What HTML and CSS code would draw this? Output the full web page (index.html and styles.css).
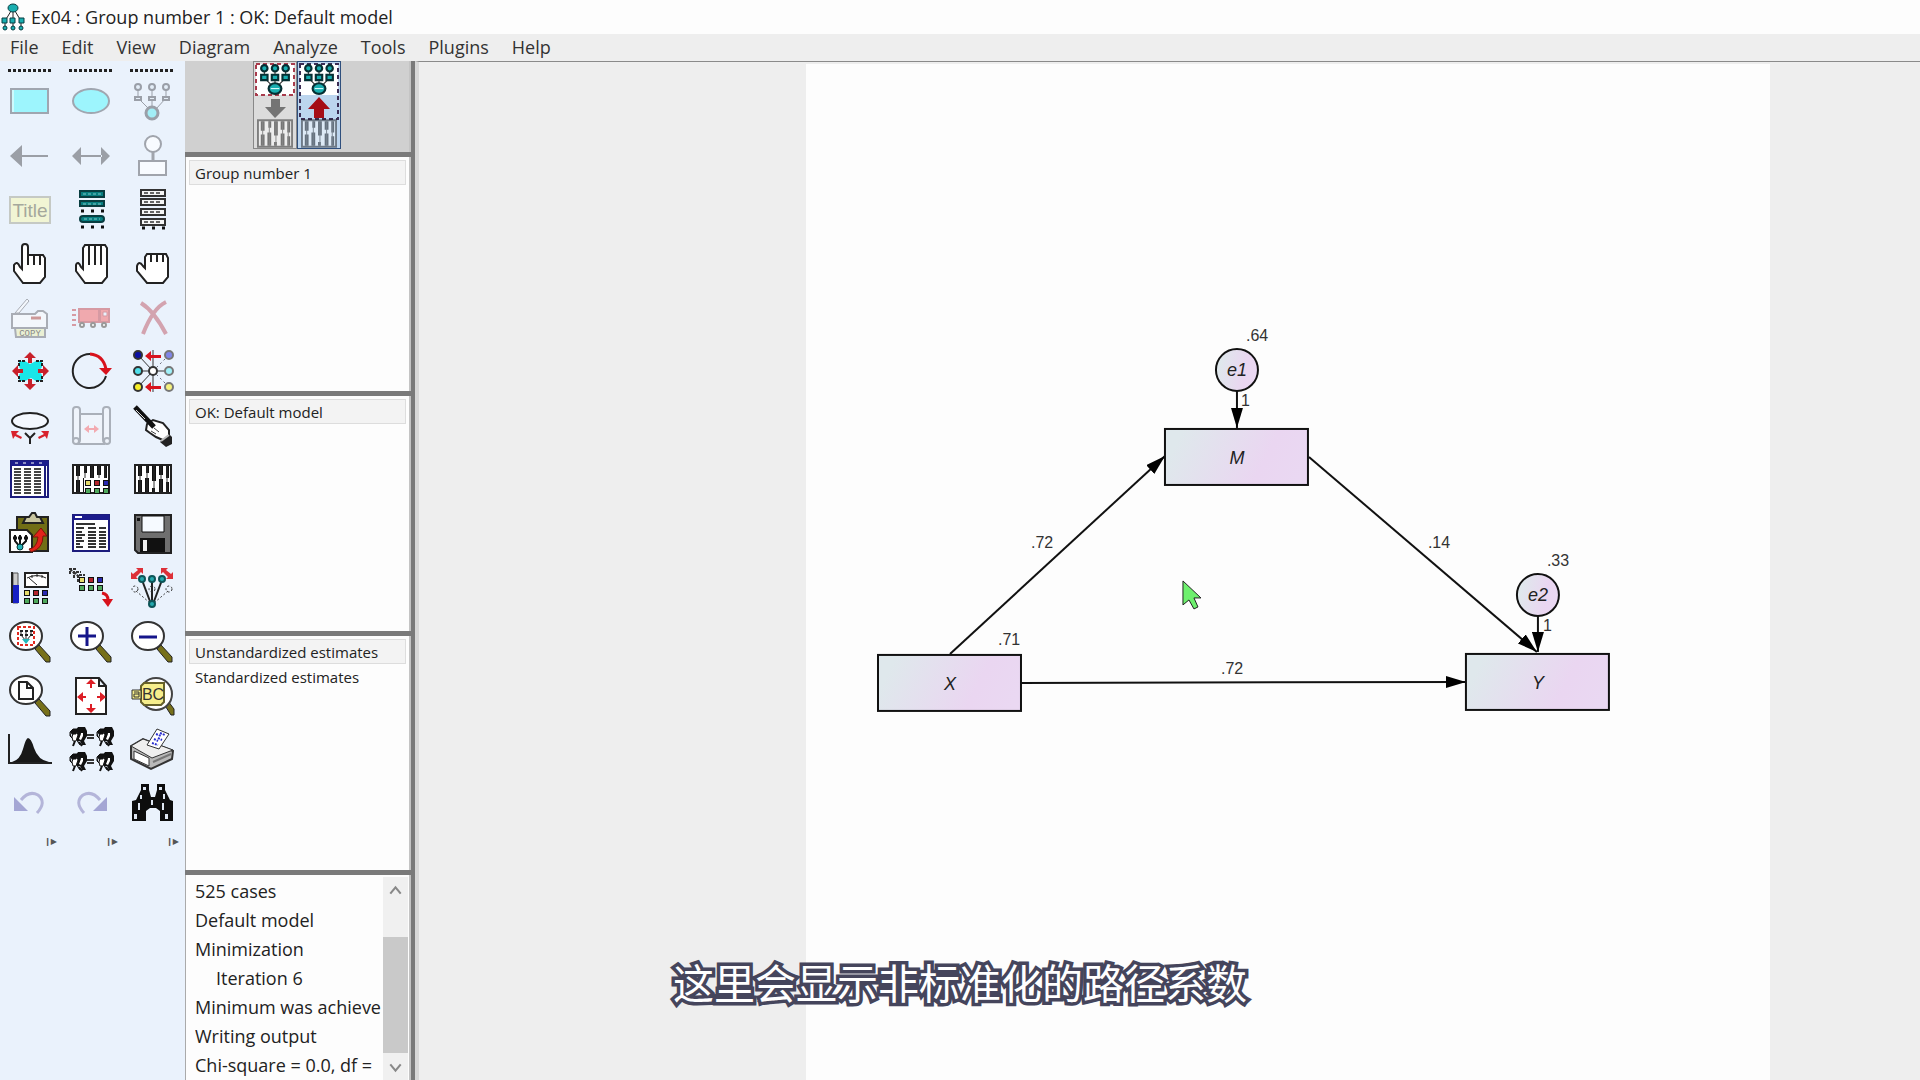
FILE: index.html
```html
<!DOCTYPE html>
<html lang="en">
<head>
  <meta charset="UTF-8">
  <meta name="viewport" content="width=device-width, initial-scale=1.0">
  <title>Ex04 : Group number 1 : OK: Default model</title>
  <link rel="stylesheet" href="styles.css">
</head>
<body>
  <!-- shared icon parts -->
  <svg class="defs" aria-hidden="true">
    <defs>
      <linearGradient id="fill" x1="0" y1="0.4" x2="1" y2="0.6">
        <stop offset="0.05" stop-color="#dfe8ec"/>
        <stop offset="0.7" stop-color="#ead6f1"/>
        <stop offset="1" stop-color="#ead8f2"/>
      </linearGradient>
      <marker id="head" viewBox="0 0 20 12" refX="20" refY="6" markerWidth="20" markerHeight="12" markerUnits="userSpaceOnUse" orient="auto">
        <path d="M0 0L20 6L0 12z"/>
      </marker>
      <symbol id="lens" viewBox="0 0 46 46">
        <path d="M28 31L32 27L43 39V44H39z" fill="#77701a" stroke="#222" stroke-width="1"/>
        <ellipse cx="19" cy="18" rx="16" ry="14" fill="#fff" stroke="#333" stroke-width="2"/>
      </symbol>
      <symbol id="squares" viewBox="0 0 24 15">
        <path d="M0 0H6V6H0zM9 0H15V6H9zM18 0H24V6H18zM0 8H6V14H0zM9 8H15V14H9zM18 8H24V14H18z" fill="#111"/>
        <path d="M1 1H5V5H1z" fill="#e6dc6c"/><path d="M10 1H14V5H10z" fill="#b3242c"/><path d="M19 1H23V5H19z" fill="#2a2ab0"/>
        <path d="M1 9H5V13H1zM10 9H14V13H10zM19 9H23V13H19z" fill="#4fa95c"/>
      </symbol>
      <symbol id="keys" viewBox="0 0 38 30">
        <path d="M1 1H37V29H1z" fill="#fff" stroke="#222" stroke-width="2"/>
        <path d="M4 2H8V12H4zM12 2H15V9H12zM18 2H22V17H18zM25 2H29V11H25zM32 2H35V14H32zM4 16H8V28H4zM11 14H15V28H11zM18 24H21V28H18zM25 15H29V28H25zM32 18H35V28H32z" fill="#111"/>
        <path d="M6 2V28M13 2V28M20 2V28M27 2V28M33 2V28" stroke="#333" stroke-width="1"/>
      </symbol>
      <symbol id="tree" viewBox="0 0 30 30">
        <path d="M5 4V14L15 24L25 14V4M15 4V24" fill="none" stroke="#333"/>
        <g fill="#19aeb0" stroke="#062f33" stroke-width="2">
          <circle cx="5" cy="5" r="3"/><circle cx="15" cy="5" r="3"/><circle cx="25" cy="5" r="3"/>
          <path d="M2 11H8V16H2zM12 11H18V16H12zM22 11H28V16H22z"/>
          <ellipse cx="15" cy="24" rx="6" ry="5"/>
        </g>
        <path d="M11 24H19" stroke="#dff"/>
      </symbol>
      <symbol id="heads" viewBox="0 0 18 20">
        <path d="M7 3L9 0H16L18 4V9L15 14L17 18H13L11 14H8z" fill="#111"/>
        <path d="M12 6H14V9L12 13L10 12z" fill="#fff"/>
        <path d="M1 5L4 2H9L11 5V8L9 12V15L11 18M1 5V9L3 11" fill="#111" stroke="#111"/>
        <path d="M4 7H7L8 5L9 8L7 14H4L3 10z" fill="#fff" stroke="#111"/>
        <path d="M6 14L4 19M10 15L13 19" stroke="#111" stroke-width="2"/>
      </symbol>
    </defs>
  </svg>

  <header class="titlebar">
    <svg class="app-icon" viewBox="0 0 24 28" aria-hidden="true">
      <path d="M12 6V24M10 8L4 18V24M14 8L20 18V24" fill="none" stroke="#222"/>
      <g fill="#19aeb0" stroke="#063c40" stroke-width="1">
        <ellipse cx="12" cy="5" rx="5" ry="4"/>
        <path d="M1 15H6V20H1zM9 15H14V20H9zM18 15H23V20H18z"/>
        <circle cx="4" cy="25" r="2"/><circle cx="12" cy="25" r="2"/><circle cx="20" cy="25" r="2"/>
      </g>
    </svg>
    <h1>Ex04 : Group number 1 : OK: Default model</h1>
  </header>

  <nav class="menubar">
    <a href="#">File</a>
    <a href="#">Edit</a>
    <a href="#">View</a>
    <a href="#">Diagram</a>
    <a href="#">Analyze</a>
    <a href="#">Tools</a>
    <a href="#">Plugins</a>
    <a href="#">Help</a>
  </nav>

  <main class="workspace">
    <aside class="toolbox">
      <i class="grip"></i><i class="grip"></i><i class="grip"></i>

      <button aria-label="Draw observed variable"><svg viewBox="0 0 46 46"><path d="M4 11H41V35H4z" fill="#9df5fd" stroke="#a0a6b0" stroke-width="2"/><path d="M6 12V34" stroke="#fff"/></svg></button>
      <button aria-label="Draw unobserved variable"><svg viewBox="0 0 46 46"><ellipse cx="23" cy="23" rx="18" ry="12" fill="#9df5fd" stroke="#a0a6b0" stroke-width="2"/></svg></button>
      <button aria-label="Draw latent variable"><svg viewBox="0 0 46 46" fill="#e4eef8" stroke="#9a9fa8" stroke-width="2"><path d="M9 12V20L20 31M23 12V29M37 12V20L27 31" fill="none" stroke-width="1"/><circle cx="9" cy="9" r="3"/><circle cx="23" cy="9" r="3"/><circle cx="37" cy="9" r="3"/><path d="M6 19H12V22H6zM20 19H26V22H20zM34 19H40V22H34z"/><circle cx="23" cy="35" r="6" fill="#a2eef6" stroke-width="3"/></svg></button>

      <button aria-label="Draw path"><svg viewBox="0 0 46 46" fill="#9b9fa6"><path d="M3 24L15 13V35zM14 23H41V25H14z"/></svg></button>
      <button aria-label="Draw covariance"><svg viewBox="0 0 46 46" fill="#9b9fa6"><path d="M4 24L13 15V33zM42 24L33 15V33zM12 23H34V25H12z"/></svg></button>
      <button aria-label="Add unique variable"><svg viewBox="0 0 46 46" fill="#f8fbff" stroke="#a0a4ac"><path d="M24 19V29" stroke-width="3"/><circle cx="24" cy="12" r="8" stroke-width="2"/><path d="M10 29H37V43H10z" stroke-width="2"/></svg></button>

      <button aria-label="Figure caption"><svg viewBox="0 0 46 46"><path d="M3 11H43V37H3z" fill="#f1f5d4" stroke="#c5c9c4" stroke-width="2"/><text class="title-glyph" x="23" y="31" text-anchor="middle">Title</text></svg></button>
      <button aria-label="List variables in model"><svg viewBox="0 0 46 46"><g fill="#087e80" stroke="#083d40" stroke-width="2"><path d="M12 5H36V11H12zM12 15H36V20H12z"/><rect x="12" y="30" width="24" height="6" rx="3"/></g><path d="M15 8H33M15 18H33M16 33H32" stroke="#7cc8c8" stroke-dasharray="3 2"/><path d="M13 25H36M13 41H36" stroke="#111" stroke-width="3" stroke-dasharray="3 7"/></svg></button>
      <button aria-label="List variables in data set"><svg viewBox="0 0 46 46"><g fill="#f5f5f5" stroke="#333" stroke-width="2"><path d="M12 4H36V10H12zM12 13H36V19H12zM12 23H36V29H12zM12 33H36V39H12z"/></g><path d="M15 7H33M15 16H33M15 26H33M15 36H33" stroke="#666" stroke-width="2" stroke-dasharray="4 2"/><path d="M13 42H36" stroke="#111" stroke-width="3" stroke-dasharray="3 7"/></svg></button>

      <button aria-label="Select one object"><svg viewBox="0 0 46 46" fill="#fff" stroke="#222" stroke-width="2"><path d="M15 29V7Q15 4 18 4T21 7V15H36L38 18V37L33 43H16L7 31V25Q10 20 13 27zM21 15V25M27 15V25M33 15V25"/></svg></button>
      <button aria-label="Select all objects"><svg viewBox="0 0 46 46" fill="#fff" stroke="#222" stroke-width="2"><path d="M15 29V8L17 5H37L39 8V37L34 43H17L8 31V25Q10 20 13 27zM21 5V25M27 5V25M33 5V25"/></svg></button>
      <button aria-label="Deselect all objects"><svg viewBox="0 0 46 46" fill="#fff" stroke="#222" stroke-width="2"><path d="M16 28V17L18 14H37L39 18V37L34 43H18L8 31V26Q10 20 14 26zM22 15V22M28 15V22M34 15V22"/></svg></button>

      <button aria-label="Duplicate objects"><svg viewBox="0 0 46 46" fill="#f3f7fc" stroke="#a9adb5"><path d="M8 19L20 5L22 7L12 19z"/><path d="M5 20H28L31 17H36L40 20V34H5z" stroke-width="2"/><path d="M8 34H38V43H9z" fill="#eaf0d4" stroke-width="2"/><path d="M24 24H34" stroke="#c99" stroke-width="3"/><text class="copy-glyph" x="23" y="42" text-anchor="middle">COPY</text></svg></button>
      <button aria-label="Move objects"><svg viewBox="0 0 46 46" stroke="#d69aa3"><path d="M11 15H31V28H11zM32 28V15H41V28z" fill="#f0a9ae" stroke-width="2"/><path d="M35 18H39V22H35z" fill="#eaf2fc"/><path d="M4 16H8M4 21H8M4 26H8M4 31H8" stroke-width="2"/><g fill="#fff" stroke="#999" stroke-width="2"><circle cx="14" cy="31" r="2"/><circle cx="25" cy="31" r="2"/><circle cx="36" cy="31" r="2"/></g></svg></button>
      <button aria-label="Erase objects"><svg viewBox="0 0 46 46" fill="none" stroke="#d3a3af" stroke-width="4"><path d="M12 9Q25 17 37 40M37 8Q24 14 14 40"/></svg></button>

      <button aria-label="Change the shape of objects"><svg viewBox="0 0 46 46"><path d="M12 13H18L23 16L29 13H35V19L32 23L35 27V33H29L24 30L18 33H12V27L15 23L12 19z" fill="#19e7e9"/><path d="M12 18V13H18M29 13H35V18M35 28V33H29M18 33H12V28" fill="none" stroke="#222" stroke-width="2" stroke-dasharray="3 1"/><path d="M23 4L29 10H25V15H21V10H17zM23 42L29 36H25V31H21V36H17zM5 23L11 17V21H16V25H11V29zM42 23L36 17V21H31V25H36V29z" fill="#c8202a"/></svg></button>
      <button aria-label="Rotate indicators"><svg viewBox="0 0 46 46" fill="none"><path d="M38 28A17 17 0 1 1 22 6" stroke="#222" stroke-width="2"/><path d="M22 6Q35 7 38 21" stroke="#d8121c" stroke-width="3"/><path d="M31 20H44L38 27z" fill="#d8121c"/></svg></button>
      <button aria-label="Reflect indicators"><svg viewBox="0 0 46 46"><path d="M9 7L24 23L9 39M9 23H40M24 2V44" fill="none" stroke="#333"/><path d="M24 23L40 7M24 23L40 39" stroke="#667" stroke-dasharray="2 3"/><g stroke="#333" stroke-width="2"><circle cx="9" cy="7" r="4" fill="#0c10a4"/><circle cx="9" cy="23" r="4" fill="#4fdfea"/><circle cx="9" cy="39" r="4" fill="#f7ee28"/><circle cx="24" cy="23" r="4" fill="#fff"/></g><g stroke="#777" stroke-width="2"><circle cx="40" cy="7" r="4" fill="#8085e8"/><circle cx="40" cy="23" r="4" fill="#9ff0f8"/><circle cx="40" cy="39" r="4" fill="#f5f17c"/></g><path d="M16 8L22 3V7H32V10H22V13zM16 39L22 34V38H32V41H22V44z" fill="#d8121c"/></svg></button>

      <button aria-label="Move parameter values"><svg viewBox="0 0 46 46"><ellipse cx="23" cy="19" rx="18" ry="8" fill="#f4f8fe" stroke="#222" stroke-width="2"/><path d="M18 31L23 36L28 31M23 36V42" fill="none" stroke="#222" stroke-width="2"/><path d="M4 29H12L9 32L15 35L14 37L8 34L6 37zM42 29H34L37 32L31 35L32 37L38 34L40 37z" fill="#d8222c"/></svg></button>
      <button aria-label="Reposition path diagram"><svg viewBox="0 0 46 46" fill="#eff4fb" stroke="#aab0b9" stroke-width="2"><path d="M11 12H36V42H8"/><rect x="5" y="5" width="7" height="36" rx="3"/><rect x="35" y="5" width="7" height="36" rx="3"/><circle cx="8" cy="39" r="3"/><circle cx="39" cy="39" r="3"/><path d="M16 27L21 23V26H26V23L31 27L26 31V28H21V31z" fill="#f3aab0" stroke="none"/></svg></button>
      <button aria-label="Touch up a variable"><svg viewBox="0 0 46 46"><path d="M18 22L24 18L34 21L40 28V34L36 39L27 35L21 31L17 28z" fill="#fff" stroke="#222" stroke-width="2"/><path d="M22 29L27 32M25 26L30 30" stroke="#444"/><path d="M6 5L25 25" stroke="#111" stroke-width="5"/><path d="M7 8L16 17" stroke="#ddd" stroke-width="1"/><path d="M31 40L40 32L43 35V42L37 45z" fill="#222"/><path d="M32 39L40 33" stroke="#bbb" stroke-width="2"/></svg></button>

      <button aria-label="Select data files"><svg viewBox="0 0 46 46"><path d="M4 5H41V41H4z" fill="#fff" stroke="#1c1c7c" stroke-width="2"/><path d="M4 5H41V10H4z" fill="#1c1c8c"/><path d="M8 7H38" stroke="#fff" stroke-dasharray="3 5"/><path d="M7 13H14M17 13H24M27 13H34M7 16H14M17 16H24M27 16H34M7 19H14M17 19H24M27 19H34M7 22H14M17 22H24M27 22H34M7 25H14M17 25H24M27 25H34M7 28H14M17 28H24M27 28H34M7 31H14M17 31H24M27 31H34M7 34H14M17 34H24M27 34H34M7 37H14M17 37H24M27 37H34" stroke="#444" stroke-width="2"/><path d="M38 10V40" stroke="#1c1c7c" stroke-width="2"/></svg></button>
      <button aria-label="Analysis properties"><svg viewBox="0 0 46 46"><use href="#keys" x="4" y="8" width="38" height="30"/><path d="M16 22H40V36H16z" fill="#fff"/><use href="#squares" x="17" y="24" width="24" height="15"/></svg></button>
      <button aria-label="Calculate estimates"><svg viewBox="0 0 46 46"><use href="#keys" x="5" y="8" width="38" height="30"/></svg></button>

      <button aria-label="Copy diagram to clipboard"><svg viewBox="0 0 46 46"><path d="M10 7H41V41H10z" fill="#716e15" stroke="#222" stroke-width="2"/><path d="M16 13L19 7H22L25 3H28L30 7H33L36 13z" fill="#c9c6a0" stroke="#222" stroke-width="2"/><path d="M3 20H20L25 25V42H3z" fill="#fff" stroke="#222" stroke-width="2"/><path d="M8 25V31L13 37L19 31V25M13 25V36" fill="none" stroke="#111" stroke-width="2"/><path d="M6 28H10M11 28H15M17 28H21" stroke="#111" stroke-width="3"/><circle cx="13" cy="37" r="3" fill="#26b3b8" stroke="#033"/><path d="M22 39Q30 38 31 27H26L34 18L40 26H36Q36 39 24 42z" fill="#e2231a" stroke="#7c1508"/></svg></button>
      <button aria-label="View text"><svg viewBox="0 0 46 46"><path d="M5 5H41V41H5z" fill="#fff" stroke="#1c1c7c" stroke-width="2"/><path d="M5 5H41V10H5z" fill="#1c1c8c"/><path d="M7 7H14" stroke="#fff" stroke-width="2"/><path d="M8 14H27M8 18H16M20 18H28M31 18H38M8 22H14M20 22H28M31 22H38M8 25H17M20 25H28M31 25H38M8 28H14M20 28H28M31 28H38M8 31H16M20 31H28M31 31H38M8 34H12M20 34H28M31 34H38M8 37H15M20 37H28M31 37H38" stroke="#333" stroke-width="2"/></svg></button>
      <button aria-label="Save diagram"><svg viewBox="0 0 46 46"><path d="M6 5H42V43H9L6 40z" fill="#6f6f6f" stroke="#222" stroke-width="2"/><path d="M13 6H35V22H13z" fill="#f6faff" stroke="#111"/><path d="M8 8H11V11H8zM11 28H36V42H11z" fill="#111"/><path d="M14 30H18V41H14z" fill="#eee"/></svg></button>

      <button aria-label="Object properties"><svg viewBox="0 0 46 46"><path d="M6 9H11V39H6z" fill="#ccc" stroke="#555"/><path d="M6 21H12V39H6z" fill="#1820c4"/><path d="M5 8V39" stroke="#222" stroke-width="2"/><path d="M18 9H41V23H18z" fill="#fff" stroke="#222" stroke-width="2"/><path d="M20 14Q30 9 39 14M30 21L22 14M25 11V14M30 10V13M35 11V14" fill="none" stroke="#222"/><use href="#squares" x="17" y="26" width="24" height="15"/></svg></button>
      <button aria-label="Drag properties"><svg viewBox="0 0 46 46"><path d="M2 10V5H9M6 14V8H13M10 18V11H17M2 5L7 10M6 8L11 13" fill="none" stroke="#333" stroke-width="2" stroke-dasharray="3 1"/><use href="#squares" x="11" y="13" width="24" height="15"/><path d="M34 29Q40 30 40 36" fill="none" stroke="#d8121c" stroke-width="3"/><path d="M34 35H45L40 43z" fill="#d8121c"/></svg></button>
      <button aria-label="Preserve symmetries"><svg viewBox="0 0 46 46"><path d="M13 16L22 40M23 16V38M33 16L24 40" stroke="#222" stroke-width="2"/><path d="M7 27L21 39M39 27L25 39" stroke="#444" stroke-dasharray="2 2"/><g fill="#24a9ae" stroke="#0d5558" stroke-width="2"><circle cx="13" cy="15" r="3"/><circle cx="23" cy="15" r="3"/><circle cx="33" cy="15" r="3"/><circle cx="23" cy="40" r="3"/></g><g fill="none" stroke="#333" stroke-dasharray="2 2"><circle cx="6" cy="25" r="3"/><circle cx="40" cy="25" r="3"/><circle cx="23" cy="25" r="3"/></g><path d="M2 15V8L4 10L9 6L7 4H14V10L12 8L7 13L9 15zM44 15V8L42 10L37 6L39 4H32V10L34 8L39 13L37 15z" fill="#dd3038"/></svg></button>

      <button aria-label="Zoom in on an area"><svg viewBox="0 0 46 46"><use href="#lens"/><path d="M11 9H27V27H11z" fill="none" stroke="#e02a20" stroke-width="2" stroke-dasharray="3 2"/><path d="M14 12V17L19 23L24 17V12M19 12V22" fill="none" stroke="#222"/><path d="M13 13H26M13 17H26" stroke="#222" stroke-width="2" stroke-dasharray="3 2"/><path d="M15 21H23L19 26z" fill="#23b7ba"/></svg></button>
      <button aria-label="Zoom in"><svg viewBox="0 0 46 46"><use href="#lens"/><path d="M19 9V28M10 18H28" stroke="#15158a" stroke-width="3"/></svg></button>
      <button aria-label="Zoom out"><svg viewBox="0 0 46 46"><use href="#lens"/><path d="M10 19H28" stroke="#15158a" stroke-width="3"/></svg></button>

      <button aria-label="Show page"><svg viewBox="0 0 46 46"><use href="#lens"/><path d="M12 10H20L26 16V27H12zM20 10V16H26" fill="#fff" stroke="#222" stroke-width="2"/></svg></button>
      <button aria-label="Resize diagram to page"><svg viewBox="0 0 46 46"><path d="M8 6H31L38 14V42H8zM31 6V14H38" fill="#fff" stroke="#222" stroke-width="2"/><path d="M23 7L28 12H24V16H22V12H18zM23 41L28 36H24V32H22V36H18zM9 25L15 20V24H18V26H15V30zM38 25L32 20V24H29V26H32V30z" fill="#dc1e26"/></svg></button>
      <button aria-label="Loupe"><svg viewBox="0 0 46 46"><path d="M35 32L39 29L45 37V43H42z" fill="#77701a" stroke="#222"/><circle cx="27" cy="22" r="16" fill="#fff" stroke="#444" stroke-width="2"/><path d="M12 14L15 11H35V30L32 33H15L12 30z" fill="#f6ee8c" stroke="#66612a" stroke-width="2"/><path d="M3 18H12V27H3zM5 20H10V25H5V22H10" fill="#f6ee8c" stroke="#333"/><text class="loupe-glyph" x="24" y="28" text-anchor="middle">BC</text></svg></button>

      <button aria-label="Bayesian estimation"><svg viewBox="0 0 46 46"><path d="M2 8V37H45" fill="none" stroke="#222" stroke-width="2"/><path d="M5 36Q13 34 16 23Q19 12 21 12Q24 12 27 22Q31 34 42 36z" fill="#181818"/></svg></button>
      <button aria-label="Multiple-group analysis"><svg viewBox="0 0 46 46"><use href="#heads" x="1" y="1" width="18" height="20"/><use href="#heads" x="28" y="1" width="18" height="20"/><use href="#heads" x="1" y="26" width="18" height="20"/><use href="#heads" x="28" y="26" width="18" height="20"/><path d="M19 9H26M19 12H26M19 34H26M19 37H26" stroke="#333" stroke-width="2"/></svg></button>
      <button aria-label="Print"><svg viewBox="0 0 46 46" stroke="#333"><path d="M2 20L14 13L44 25L43 33L22 43L2 33z" fill="#b9b9b9" stroke-width="2"/><path d="M2 20L14 13L44 24L23 32z" fill="#efefef"/><path d="M5 25L20 32V40L5 33z" fill="#fff"/><path d="M24 36L42 28" stroke="#777" stroke-width="2"/><path d="M18 19L28 3L40 8L30 23z" fill="#fff"/><path d="M27 8L32 10M29 12L33 14M25 13L29 15M31 7L36 9M23 17L29 19" stroke="#2a2fd0" stroke-width="2" stroke-dasharray="2 1"/></svg></button>

      <button aria-label="Undo"><svg viewBox="0 0 46 46"><path d="M14 20Q22 10 31 15Q40 22 30 33" fill="none" stroke="#b4b5d9" stroke-width="3"/><path d="M7 17V31H21z" fill="#a4a6d4"/></svg></button>
      <button aria-label="Redo"><svg viewBox="0 0 46 46"><path d="M32 20Q24 10 15 15Q6 22 16 33" fill="none" stroke="#b4b5d9" stroke-width="3"/><path d="M39 17V31H25z" fill="#a4a6d4"/></svg></button>
      <button aria-label="Find"><svg viewBox="0 0 46 46"><path d="M12 4H20V10L22 17H26L28 10V4H36V10L41 20L44 21V41H31V31L27 28H21L17 31V41H3V21L7 20L12 10z" fill="#0d0d0d"/><path d="M14 7H17V10H14zM30 7H33V10H30zM11 15H13V19H11zM34 14H36V19H34zM9 23H11V30H9zM22 20H24V25H22zM33 23H35V30H33zM5 34H8V39H5zM36 34H39V39H36z" fill="#dfe7f2"/></svg></button>

      <span class="more">&#x2759;&#x25B6;</span><span class="more">&#x2759;&#x25B6;</span><span class="more">&#x2759;&#x25B6;</span>
    </aside>

    <section class="sidebar">
      <div class="view-switch">
        <button class="view" aria-label="View the input path diagram">
          <svg viewBox="1 1 42 86">
            <path d="M3 3H41V34H3z" fill="#fff" stroke="#a83b4c" stroke-width="2" stroke-dasharray="4 3"/>
            <use href="#tree" x="5" y="2" width="34" height="32"/>
            <path d="M18 38H27V46H33L22 57L12 46H18z" fill="#747474"/>
            <use class="dim" href="#keys" x="4" y="58" width="36" height="29"/>
          </svg>
        </button>
        <button class="view selected" aria-label="View the output path diagram">
          <svg viewBox="1 1 42 86">
            <path d="M3 3H41V34H3z" fill="#fff"/>
            <path d="M3 3H41V58H3z" fill="none" stroke="#3b2d54" stroke-width="2" stroke-dasharray="4 3"/>
            <use href="#tree" x="5" y="2" width="34" height="32"/>
            <path d="M22 36L33 48H27V57H17V48H11z" fill="#a50d16"/>
            <use class="dim" href="#keys" x="4" y="58" width="36" height="29"/>
          </svg>
        </button>
      </div>

      <ul class="list">
        <li class="current">Group number 1</li>
      </ul>
      <ul class="list">
        <li class="current">OK: Default model</li>
      </ul>
      <ul class="list">
        <li class="current">Unstandardized estimates</li>
        <li>Standardized estimates</li>
      </ul>

      <div class="messages">
        <div class="log">
          <p>525 cases</p>
          <p>Default model</p>
          <p>Minimization</p>
          <p class="step">Iteration 6</p>
          <p>Minimum was achieve</p>
          <p>Writing output</p>
          <p>Chi-square = 0.0, df =</p>
        </div>
        <div class="scrollbar">
          <svg viewBox="0 0 24 24" aria-hidden="true"><path d="M7 15L12 9L17 15" fill="none" stroke="#888" stroke-width="2"/></svg>
          <div class="track"><div class="thumb"></div></div>
          <svg viewBox="0 0 24 24" aria-hidden="true"><path d="M7 10L12 16L17 10" fill="none" stroke="#888" stroke-width="2"/></svg>
        </div>
      </div>
    </section>

    <section class="canvas">
      <div class="page">
        <svg class="diagram" viewBox="0 0 964 720" role="img" aria-label="Path diagram">
          <g class="paths">
            <path d="M431 327V364" marker-end="url(#head)"/>
            <path d="M732 551V588" marker-end="url(#head)"/>
            <path d="M144 590L359 392" marker-end="url(#head)"/>
            <path d="M503 393L731 588" marker-end="url(#head)"/>
            <path d="M215 619L660 618" marker-end="url(#head)"/>
          </g>
          <g class="nodes">
            <rect x="72" y="591" width="143" height="56"/>
            <rect x="359" y="365" width="143" height="56"/>
            <rect x="660" y="590" width="143" height="56"/>
            <circle cx="431" cy="306" r="21"/>
            <circle cx="732" cy="531" r="21"/>
          </g>
          <g class="names">
            <text x="144" y="626">X</text>
            <text x="431" y="400">M</text>
            <text x="732" y="625">Y</text>
            <text x="431" y="312">e1</text>
            <text x="732" y="537">e2</text>
          </g>
          <g class="values">
            <text x="440" y="277">.64</text>
            <text x="435" y="342">1</text>
            <text x="225" y="484">.72</text>
            <text x="622" y="484">.14</text>
            <text x="741" y="502">.33</text>
            <text x="737" y="567">1</text>
            <text x="192" y="581">.71</text>
            <text x="415" y="610">.72</text>
          </g>
          <path class="pointer" d="M377 517V541L383 536L388 545L392 543L388 534H395z"/>
        </svg>
      </div>
    </section>
  </main>

  <p class="subtitle" lang="zh-CN">这里会显示非标准化的路径系数</p>
</body>
</html>
```
FILE: styles.css
```css
* {
  box-sizing: border-box;
}

body {
  margin: 0;
  height: 100vh;
  display: flex;
  flex-direction: column;
  overflow: hidden;
  background: #fdfdfd;
  color: #222;
  font-family: "Open Sans", "Noto Sans", sans-serif;
  font-size: 18px;
}

.defs {
  position: absolute;
  width: 0;
  height: 0;
}

button {
  padding: 0;
  border: none;
  background: none;
}

/* title and menu */
.titlebar {
  display: flex;
  align-items: center;
  gap: 6px;
  height: 34px;
  padding-left: 1px;
}

.titlebar h1 {
  margin: 0;
  font-size: 18px;
  font-weight: normal;
}

.app-icon {
  width: 24px;
  height: 28px;
}

.menubar {
  display: flex;
  align-items: center;
  gap: 23px;
  height: 27px;
  padding: 0 0 2px 10px;
  background: #eee;
}

.menubar a {
  color: #333;
  text-decoration: none;
}

.workspace {
  flex: 1;
  display: flex;
  min-height: 0;
}

/* toolbox */
.toolbox {
  display: grid;
  grid-template-columns: repeat(3, 61px);
  grid-template-rows: 13px repeat(14, 54px) 24px;
  align-content: start;
  width: 185px;
  background: #eaf2fc;
}

.toolbox button {
  display: flex;
  align-items: center;
  justify-content: center;
  padding-right: 2px;
}

.toolbox button svg {
  width: 46px;
  height: 46px;
}

.grip {
  width: 43px;
  height: 3px;
  margin: 8px 0 0 8px;
  background: repeating-linear-gradient(90deg, #222 0 3px, transparent 3px 5px);
}

.more {
  padding-right: 4px;
  color: #555;
  font-family: "DejaVu Sans", sans-serif;
  font-size: 8px;
  line-height: 24px;
  text-align: right;
}

.title-glyph {
  fill: #a5a89c;
  font: 19px "Liberation Sans", sans-serif;
}

.copy-glyph {
  fill: #888;
  stroke: none;
  font: 9px "Liberation Mono", monospace;
}

.loupe-glyph {
  fill: #333;
  font: 16px "Liberation Sans", sans-serif;
}

/* sidebar */
.sidebar {
  display: flex;
  flex-direction: column;
  gap: 5px;
  width: 230px;
  border-right: 4px solid #7a7a7a;
  background: #7a7a7a;
}

.sidebar > * {
  border-right: 2px solid #c4c4c4;
}

.view-switch {
  display: flex;
  justify-content: center;
  height: 91px;
  background: #d0d0d0;
}

.view {
  width: 44px;
  height: 88px;
  border: 1px solid #888;
  background: #dcdcdc;
}

.view.selected {
  border-color: #2f4f7d;
  background: #bcd5ee;
}

.view svg {
  display: block;
  width: 100%;
  height: 100%;
}

.dim {
  opacity: 0.5;
}

.list {
  flex: 1;
  margin: 0;
  padding: 3px;
  border-left: 1px solid #aaa;
  background: #fdfdfd;
  list-style: none;
  font-size: 15px;
}

.list li {
  height: 25px;
  padding-left: 5px;
  border: 1px solid transparent;
  line-height: 24px;
}

.list .current {
  border-color: #ddd;
  background: #f3f3f3;
}

.messages {
  display: flex;
  padding: 2px 1px 0 9px;
  border-left: 1px solid #aaa;
  background: #fdfdfd;
}

.log {
  flex: 1;
  overflow: hidden;
  white-space: nowrap;
}

.log p {
  margin: 0;
  line-height: 29px;
}

.log .step {
  padding-left: 21px;
}

.scrollbar {
  display: flex;
  flex-direction: column;
  width: 25px;
  background: #f0f0f0;
}

.scrollbar svg {
  width: 25px;
  height: 27px;
}

.track {
  flex: 1;
  display: flex;
  align-items: flex-end;
}

.thumb {
  width: 100%;
  height: 78%;
  background: #c9c9c9;
}

/* drawing area */
.canvas {
  flex: 1;
  display: flex;
  border-top: 1px solid #8a8a8a;
  border-left: 4px solid #d8d8d8;
  background: #eee;
}

.page {
  flex: 1;
  margin: 2px 10% 0 387px;
  background: #fdfdfd;
}

.diagram {
  display: block;
  width: 100%;
}

.paths {
  fill: none;
  stroke: #111;
  stroke-width: 2;
}

.nodes {
  fill: url(#fill);
  stroke: #111;
  stroke-width: 2;
}

.names {
  fill: #222;
  font: italic 18px "Liberation Sans", sans-serif;
  text-anchor: middle;
}

.values {
  fill: #333;
  font: 16px "Liberation Sans", sans-serif;
}

.pointer {
  fill: #6df06d;
  stroke: #222;
}

.subtitle {
  position: absolute;
  right: 0;
  bottom: 69px;
  left: 0;
  margin: 0;
  color: #fff;
  font-family: "Noto Sans CJK SC", sans-serif;
  font-size: 41px;
  font-weight: 400;
  line-height: 60px;
  text-align: center;
  -webkit-text-stroke: 7px #45455c;
  paint-order: stroke fill;
}
```
